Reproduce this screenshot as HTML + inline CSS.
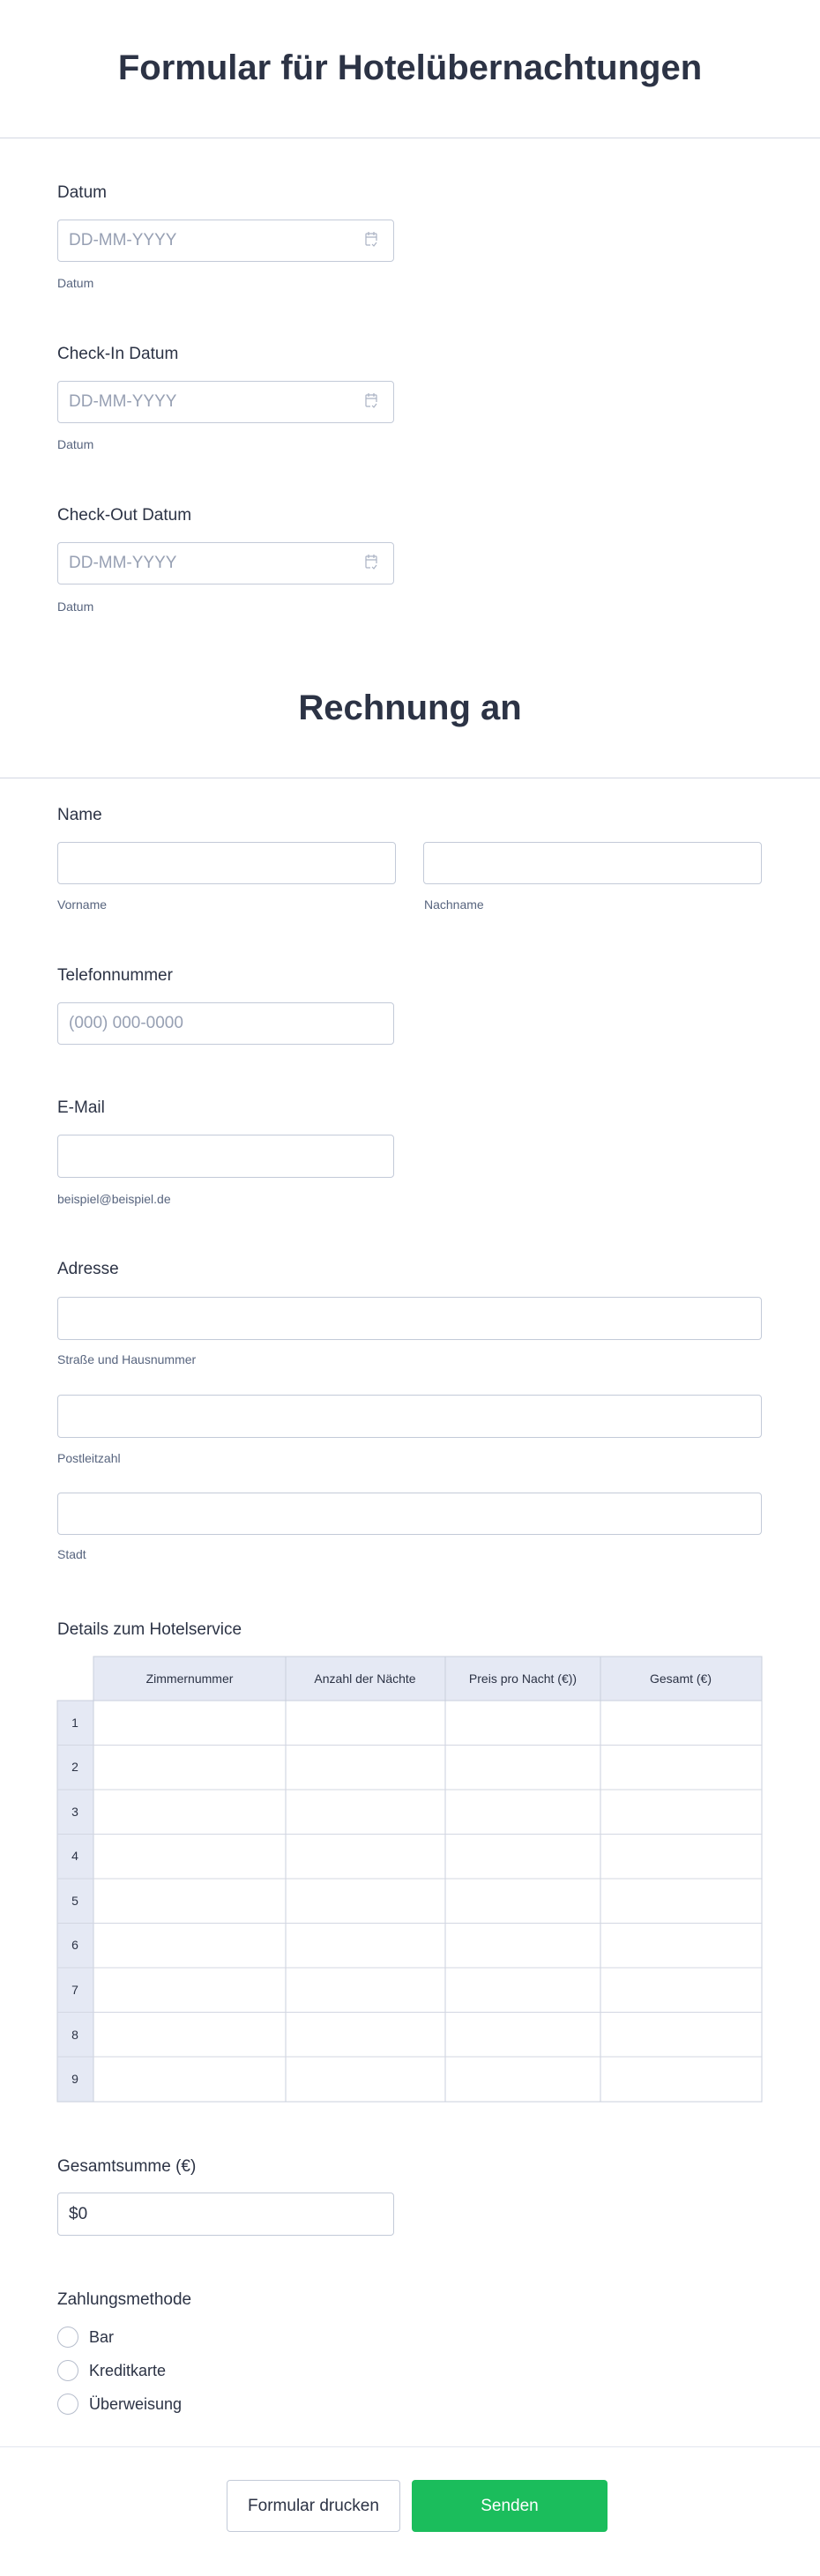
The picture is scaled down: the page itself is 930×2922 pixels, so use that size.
<!DOCTYPE html>
<html><head><meta charset="utf-8"><style>
*{box-sizing:border-box;margin:0;padding:0}
body{width:930px;height:2922px;position:relative;background:#fff;font-family:"Liberation Sans",sans-serif;color:#2c3345;overflow:hidden}
.a{position:absolute}
.h{left:0;width:930px;text-align:center;font-weight:bold;font-size:40px;line-height:46px;color:#2c3345}
.hr{left:0;width:930px;height:1px;background:#d3d7e2}
.l{left:65px;font-size:19px;line-height:24px;color:#2c3345}
.s{font-size:14px;line-height:18px;color:#57647e}
.i{border:1px solid #c3cad8;border-radius:4px;background:#fff;font-size:19px;color:#2c3345;padding-left:12px;display:flex;align-items:center}
.p{color:#97a0b3}
.r{left:65px;width:24px;height:24px;border:1px solid #b6bdcc;border-radius:50%}
.rt{left:101px;font-size:18px;line-height:24px}
</style></head><body>
<div class="a h" style="top:54px">Formular für Hotelübernachtungen</div>
<div class="a hr" style="top:156px"></div>

<div class="a l" style="top:207px">Datum</div>
<div class="a i" style="left:65px;top:249px;width:382px;height:48px"><span class="p">DD-MM-YYYY</span></div>
<svg class="a" style="left:414px;top:262px" width="14" height="18" viewBox="0 0 14 18" fill="none" stroke="#aab2c3" stroke-width="1.2"><path d="M6 16H2a1 1 0 0 1-1-1V4a1 1 0 0 1 1-1h10a1 1 0 0 1 1 1v7M1 7h12M4 1v4M10 1v4M8 15l2 2 3-4"/></svg>
<div class="a s" style="left:65px;top:312px">Datum</div>

<div class="a l" style="top:390px">Check-In Datum</div>
<div class="a i" style="left:65px;top:432px;width:382px;height:48px"><span class="p">DD-MM-YYYY</span></div>
<svg class="a" style="left:414px;top:445px" width="14" height="18" viewBox="0 0 14 18" fill="none" stroke="#aab2c3" stroke-width="1.2"><path d="M6 16H2a1 1 0 0 1-1-1V4a1 1 0 0 1 1-1h10a1 1 0 0 1 1 1v7M1 7h12M4 1v4M10 1v4M8 15l2 2 3-4"/></svg>
<div class="a s" style="left:65px;top:495px">Datum</div>

<div class="a l" style="top:573px">Check-Out Datum</div>
<div class="a i" style="left:65px;top:615px;width:382px;height:48px"><span class="p">DD-MM-YYYY</span></div>
<svg class="a" style="left:414px;top:628px" width="14" height="18" viewBox="0 0 14 18" fill="none" stroke="#aab2c3" stroke-width="1.2"><path d="M6 16H2a1 1 0 0 1-1-1V4a1 1 0 0 1 1-1h10a1 1 0 0 1 1 1v7M1 7h12M4 1v4M10 1v4M8 15l2 2 3-4"/></svg>
<div class="a s" style="left:65px;top:679px">Datum</div>

<div class="a h" style="top:780px">Rechnung an</div>
<div class="a hr" style="top:882px"></div>

<div class="a l" style="top:913px">Name</div>
<div class="a i" style="left:65px;top:955px;width:384px;height:48px"></div>
<div class="a i" style="left:480px;top:955px;width:384px;height:48px"></div>
<div class="a s" style="left:65px;top:1017px">Vorname</div>
<div class="a s" style="left:481px;top:1017px">Nachname</div>

<div class="a l" style="top:1095px">Telefonnummer</div>
<div class="a i" style="left:65px;top:1137px;width:382px;height:48px"><span class="p">(000) 000-0000</span></div>

<div class="a l" style="top:1245px">E-Mail</div>
<div class="a i" style="left:65px;top:1287px;width:382px;height:49px"></div>
<div class="a s" style="left:65px;top:1351px">beispiel@beispiel.de</div>

<div class="a l" style="top:1428px">Adresse</div>
<div class="a i" style="left:65px;top:1471px;width:799px;height:49px"></div>
<div class="a s" style="left:65px;top:1533px">Straße und Hausnummer</div>
<div class="a i" style="left:65px;top:1582px;width:799px;height:49px"></div>
<div class="a s" style="left:65px;top:1645px">Postleitzahl</div>
<div class="a i" style="left:65px;top:1693px;width:799px;height:48px"></div>
<div class="a s" style="left:65px;top:1754px">Stadt</div>

<div class="a l" style="top:1837px">Details zum Hotelservice</div>
<svg class="a" style="left:0;top:1870px" width="930" height="520">
<g font-family="Liberation Sans, sans-serif" font-size="14" fill="#2c3345" text-anchor="middle">
<rect x="106" y="9" width="758" height="50" fill="#e5e9f4" stroke="#c9cfdc"/>
<rect x="65" y="59" width="41" height="455" fill="#e5e9f4" stroke="#c9cfdc"/>
<rect x="106" y="59" width="758" height="455" fill="#fff" stroke="#c9cfdc"/>
<path d="M324 9V514M505 9V514M681 9V514" stroke="#c9cfdc"/>
<path d="M65 109.5H864M65 160H864M65 210.5H864M65 261H864M65 311.5H864M65 362H864M65 412.5H864M65 463H864" stroke="#d3d7e2"/>
<text x="215" y="39">Zimmernummer</text>
<text x="414" y="39">Anzahl der Nächte</text>
<text x="593" y="39">Preis pro Nacht (€))</text>
<text x="772" y="39">Gesamt (€)</text>
<text x="85" y="89">1</text><text x="85" y="139">2</text><text x="85" y="190">3</text><text x="85" y="240">4</text><text x="85" y="291">5</text><text x="85" y="341">6</text><text x="85" y="392">7</text><text x="85" y="443">8</text><text x="85" y="493">9</text>
</g></svg>

<div class="a l" style="top:2446px">Gesamtsumme (€)</div>
<div class="a i" style="left:65px;top:2487px;width:382px;height:49px">$0</div>

<div class="a l" style="top:2597px">Zahlungsmethode</div>
<div class="a r" style="top:2639px"></div><div class="a rt" style="top:2639px">Bar</div>
<div class="a r" style="top:2677px"></div><div class="a rt" style="top:2677px">Kreditkarte</div>
<div class="a r" style="top:2715px"></div><div class="a rt" style="top:2715px">Überweisung</div>

<div class="a hr" style="top:2775px;background:#e3e6ee"></div>
<div class="a" style="left:257px;top:2813px;width:197px;height:59px;border:1px solid #c3cad8;border-radius:4px;display:flex;align-items:center;justify-content:center;font-size:19px;color:#2c3345">Formular drucken</div>
<div class="a" style="left:467px;top:2813px;width:222px;height:59px;background:#1bbd5c;border-radius:4px;display:flex;align-items:center;justify-content:center;font-size:19px;color:#fff">Senden</div>
</body></html>
